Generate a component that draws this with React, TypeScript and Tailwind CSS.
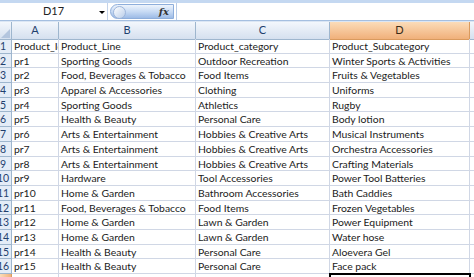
import React from "react";

const rows: string[][] = [
  ["Product_Id", "Product_Line", "Product_category", "Product_Subcategory"],
  ["pr1", "Sporting Goods", "Outdoor Recreation", "Winter Sports & Activities"],
  ["pr2", "Food, Beverages & Tobacco", "Food Items", "Fruits & Vegetables"],
  ["pr3", "Apparel & Accessories", "Clothing", "Uniforms"],
  ["pr4", "Sporting Goods", "Athletics", "Rugby"],
  ["pr5", "Health & Beauty", "Personal Care", "Body lotion"],
  ["pr6", "Arts & Entertainment", "Hobbies & Creative Arts", "Musical Instruments"],
  ["pr7", "Arts & Entertainment", "Hobbies & Creative Arts", "Orchestra Accessories"],
  ["pr8", "Arts & Entertainment", "Hobbies & Creative Arts", "Crafting Materials"],
  ["pr9", "Hardware", "Tool Accessories", "Power Tool Batteries"],
  ["pr10", "Home & Garden", "Bathroom Accessories", "Bath Caddies"],
  ["pr11", "Food, Beverages & Tobacco", "Food Items", "Frozen Vegetables"],
  ["pr12", "Home & Garden", "Lawn & Garden", "Power Equipment"],
  ["pr13", "Home & Garden", "Lawn & Garden", "Water hose"],
  ["pr14", "Health & Beauty", "Personal Care", "Aloevera Gel"],
  ["pr15", "Health & Beauty", "Personal Care", "Face pack"],
  ["", "", "", ""],
];

const cols = "grid grid-cols-[12px_47px_137px_134px_140px_1fr]";

export default function App() {
  return (
    <div className="w-[474px] h-[277px] overflow-hidden bg-white font-['Lato',sans-serif] text-[10.4px] text-[#1b1b1b]">
      {/* ribbon edge */}
      <div className="h-[3px] bg-[#c4d8f1]" />

      {/* formula bar */}
      <div className="flex h-[18px] border-b border-[#a5bfe0] bg-white">
        <div className="relative w-[108px] flex items-center justify-center border-r border-[#c3d3ea]">
          <span className="text-[11px] text-[#222]">D17</span>
          <span className="absolute right-[2px] top-[8px] border-x-[3px] border-t-[3px] border-x-transparent border-t-black" />
        </div>
        <div className="relative w-[64px] my-[1px] ml-[2px] rounded-l-full rounded-r-[2px] bg-gradient-to-b from-[#eef4fc] via-[#c8dbf4] to-[#9dbbe6] border border-[#8eaedb] flex items-center justify-end pr-[4px]">
          <span className="absolute left-[2px] top-[1px] h-[13px] w-[13px] rounded-full bg-gradient-to-br from-[#ffffff] to-[#b9cde9] border border-[#9db5da]" />
          <span className="font-['DejaVu_Serif',serif] italic text-[10px] font-bold text-[#333]">fx</span>
        </div>
        <div className="flex-1 ml-[2px] border-l border-[#b8cbe6]" />
      </div>
      <div className="h-[1px] bg-[#dbe6f4]" />

      {/* column headers */}
      <div className={`${cols} h-[17px] text-[#1f3f6e] text-[11px]`}>
        <div className="relative bg-gradient-to-b from-[#f3f7fc] to-[#d5e0ef] border-r border-b border-[#9eb6ce]">
          <span className="absolute right-[1px] bottom-[1px] h-0 w-0 border-l-[9px] border-l-transparent border-b-[9px] border-b-[#b3c5de]" />
        </div>
        {["A", "B", "C"].map((l) => (
          <div key={l} className="flex items-center justify-center bg-gradient-to-b from-[#f3f7fc] to-[#d5e0ef] border-r border-b border-[#9eb6ce]">
            {l}
          </div>
        ))}
        <div className="flex items-center justify-center bg-gradient-to-b from-[#fbdcb9] to-[#f0b07a] border-r border-b border-[#d99a5e] text-[#3a2a18]">
          D
        </div>
        <div className="bg-gradient-to-b from-[#f3f7fc] to-[#d5e0ef] border-b border-[#9eb6ce]" />
      </div>

      {/* rows */}
      {rows.map((r, i) => {
        const sel = i === rows.length - 1;
        return (
          <div key={i} className={`${cols} h-[14.7px] leading-[14px]`}>
            <div
              className={`overflow-hidden border-r border-b ${
                sel
                  ? "bg-gradient-to-r from-[#fbdcb9] to-[#f0b07a] border-[#d99a5e]"
                  : "bg-[#e4ecf7] border-[#9eb6ce]"
              }`}
            >
              <div className="w-[18px] -ml-[6px] text-center text-[#1f3f6e] text-[10.5px]">{i + 1}</div>
            </div>
            {r.map((c, j) => (
              <div
                key={j}
                className={`overflow-hidden whitespace-nowrap pl-[2px] border-r border-b border-[#d0d7e5] ${
                  sel && j === 3 ? "outline-2 outline-black -outline-offset-1" : ""
                }`}
              >
                {c}
              </div>
            ))}
            <div className="border-b border-[#d0d7e5]" />
          </div>
        );
      })}
    </div>
  );
}
